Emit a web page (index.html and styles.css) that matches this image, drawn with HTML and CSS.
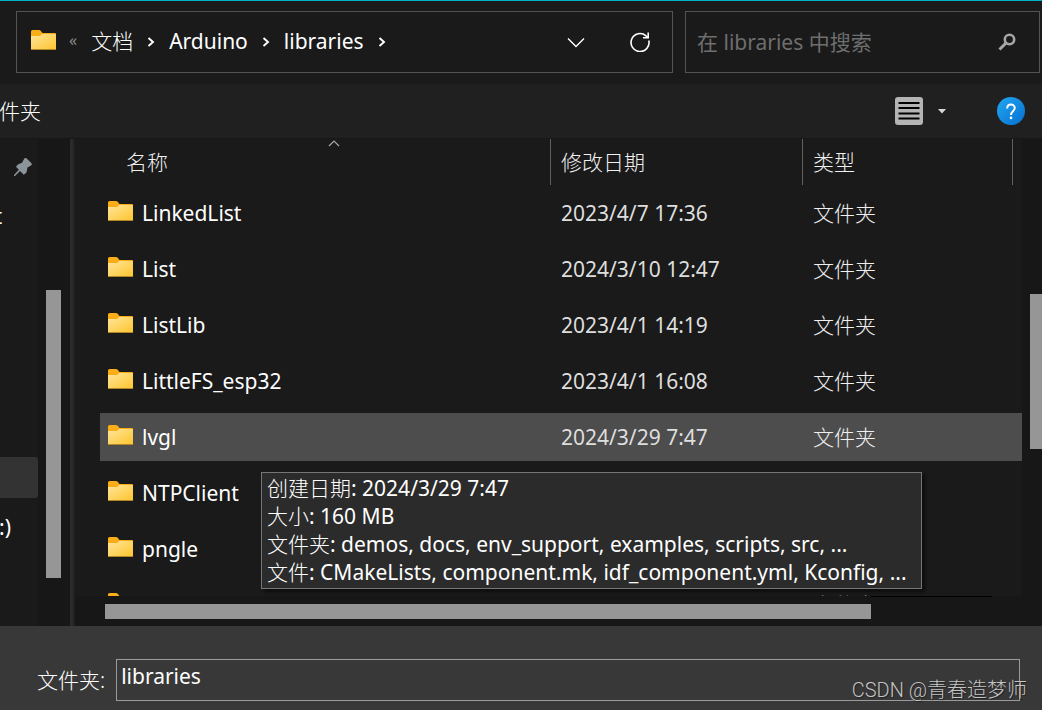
FILE: index.html
```html
<!DOCTYPE html>
<html lang="zh-CN">
<head>
    <meta charset="UTF-8">
    <meta name="viewport" content="width=device-width, initial-scale=1.0">
    <title>libraries</title>
    <link rel="stylesheet" href="styles.css">
</head>
<body>
    <!-- shared icons -->
    <svg class="defs" width="0" height="0" aria-hidden="true">
        <defs>
            <linearGradient id="paper" x1="0" y1="0" x2="1" y2="1">
                <stop offset="0" stop-color="#ffe69c"/>
                <stop offset="1" stop-color="#fdc52f"/>
            </linearGradient>
            <linearGradient id="blue" x1="0" y1="0" x2="1" y2="1">
                <stop offset="0" stop-color="#22a7f2"/>
                <stop offset="1" stop-color="#0670cf"/>
            </linearGradient>
            <symbol id="folder" viewBox="0 0 26 20">
                <path d="M0 1.500Q0 0 1.500 0H8Q9 0 9.700 .8L11.500 3H24Q25 3 25 4V19Q25 20 24 20H1Q0 20 0 19Z" fill="#f9ad16"/>
                <path d="M0 6H8.500Q9.300 6 10 5.300L11 4H24.500Q25 4 25 4.500V19H0Z" fill="url(#paper)"/>
                <path d="M0 19H25Q25 20 24 20H1Q0 20 0 19Z" fill="#b5852a"/>
            </symbol>
            <symbol id="crumb" viewBox="0 0 8 10">
                <path d="M1.500 1L6 5L1.500 9" fill="none" stroke="#fff" stroke-width="1.900"/>
            </symbol>
        </defs>
    </svg>

    <header class="topbar">
        <nav class="address">
            <svg class="folder"><use href="#folder"/></svg>
            <span class="more">«</span>
            <a href="#" class="cjk">文档</a>
            <svg class="crumb"><use href="#crumb"/></svg>
            <a href="#">Arduino</a>
            <svg class="crumb"><use href="#crumb"/></svg>
            <a href="#">libraries</a>
            <svg class="crumb"><use href="#crumb"/></svg>
            <button class="history" aria-label="历史记录">
                <svg width="18" height="11" viewBox="0 0 18 11"><path d="M1 1.500L9 9.500L17 1.500" fill="none" stroke="#fff" stroke-width="1.400"/></svg>
            </button>
            <button aria-label="刷新">
                <svg width="20" height="20" viewBox="0 0 20 20" fill="none" stroke="#fff" stroke-width="1.600"><path d="M18.800 8.500A9 9 0 1 1 16 3.800L18 5.500"/><path d="M18.200 .5V5.800H13"/></svg>
            </button>
        </nav>
        <form class="search">
            <input type="text" placeholder="在 libraries 中搜索" aria-label="搜索">
            <button type="button" aria-label="搜索">
                <svg width="18" height="18" viewBox="0 0 18 18" fill="none" stroke="#a6a6a6"><circle cx="11.500" cy="6.500" r="4.700" stroke-width="2.600"/><path d="M8 10L1.500 16.500" stroke-width="3"/></svg>
            </button>
        </form>
    </header>

    <div class="toolbar">
        <button class="new cjk">新建文件夹</button>
        <div class="tools">
            <button aria-label="更改视图">
                <svg width="28" height="28" viewBox="0 0 28 28"><rect width="28" height="28" rx="3" fill="#b4b4b4"/><path d="M3.500 6H24.500M3.500 11H24.500M3.500 16.500H24.500M3.500 21.500H24.500" stroke="#000" stroke-width="2"/></svg>
            </button>
            <button class="arrow" aria-label="更多选项">
                <svg width="8" height="5" viewBox="0 0 8 5"><path d="M0 0H8L4 4.500Z" fill="#d8d8d8"/></svg>
            </button>
            <button class="help" aria-label="帮助">
                <svg width="28" height="28" viewBox="0 0 28 28"><circle cx="14" cy="14" r="14" fill="url(#blue)"/><path d="M10.200 11.400C10.200 6.300 17.800 6.400 17.800 11C17.800 14 14 14 14 18" fill="none" stroke="#fff" stroke-width="1.900"/><circle cx="14" cy="20.900" r="1.300" fill="#fff"/></svg>
            </button>
        </div>
    </div>

    <main class="browser">
        <aside class="tree">
            <div class="node pinned">
                <svg width="20" height="20" viewBox="0 0 20 20"><path d="M11.500 1.200Q12.500 .6 13.500 1.300L18.500 6.300Q19.300 7.300 18.400 8.200L14.500 10.600L13.500 15.500L10.800 17.800L7 14L2 19H1V18L5.800 12.800L3 9.800L4.800 7.600L9 5.700Z" fill="#8b9499"/></svg>
            </div>
            <div class="node">List</div>
            <div class="node selected"></div>
            <div class="node">(D:)</div>
        </aside>
        <div class="tree-scroll"><div class="thumb"></div></div>
        <div class="splitter"></div>

        <section class="list">
            <div class="rows">
                <table>
                    <colgroup>
                        <col class="col-name">
                        <col class="col-date">
                        <col class="col-type">
                        <col class="col-rest">
                    </colgroup>
                    <thead>
                        <tr class="cjk">
                            <th>
                                <svg class="sort" width="12" height="7" viewBox="0 0 12 7"><path d="M1 6L6 1L11 6" fill="none" stroke="#a8a8a8" stroke-width="1.200"/></svg>
                                名称
                            </th>
                            <th>修改日期</th>
                            <th>类型</th>
                            <th></th>
                        </tr>
                    </thead>
                    <tbody>
                        <tr>
                            <td><div class="name"><svg class="folder"><use href="#folder"/></svg>LinkedList</div></td>
                            <td>2023/4/7 17:36</td>
                            <td class="cjk">文件夹</td>
                            <td></td>
                        </tr>
                        <tr>
                            <td><div class="name"><svg class="folder"><use href="#folder"/></svg>List</div></td>
                            <td>2024/3/10 12:47</td>
                            <td class="cjk">文件夹</td>
                            <td></td>
                        </tr>
                        <tr>
                            <td><div class="name"><svg class="folder"><use href="#folder"/></svg>ListLib</div></td>
                            <td>2023/4/1 14:19</td>
                            <td class="cjk">文件夹</td>
                            <td></td>
                        </tr>
                        <tr>
                            <td><div class="name"><svg class="folder"><use href="#folder"/></svg>LittleFS_esp32</div></td>
                            <td>2023/4/1 16:08</td>
                            <td class="cjk">文件夹</td>
                            <td></td>
                        </tr>
                        <tr class="hover">
                            <td><div class="name"><svg class="folder"><use href="#folder"/></svg>lvgl</div></td>
                            <td>2024/3/29 7:47</td>
                            <td class="cjk">文件夹</td>
                            <td></td>
                        </tr>
                        <tr>
                            <td><div class="name"><svg class="folder"><use href="#folder"/></svg>NTPClient</div></td>
                            <td></td>
                            <td></td>
                            <td></td>
                        </tr>
                        <tr>
                            <td><div class="name"><svg class="folder"><use href="#folder"/></svg>pngle</div></td>
                            <td></td>
                            <td></td>
                            <td></td>
                        </tr>
                        <tr>
                            <td><div class="name"><svg class="folder"><use href="#folder"/></svg></div></td>
                            <td></td>
                            <td class="cjk">文件夹</td>
                            <td></td>
                        </tr>
                    </tbody>
                </table>
            </div>
            <div class="list-hscroll"><div class="thumb"></div></div>
            <div class="tooltip" role="tooltip">
                <div><span class="cjk">创建日期</span>: 2024/3/29 7:47</div>
                <div><span class="cjk">大小</span>: 160 MB</div>
                <div><span class="cjk">文件夹</span>: demos, docs, env_support, examples, scripts, src, ...</div>
                <div><span class="cjk">文件</span>: CMakeLists, component.mk, idf_component.yml, Kconfig, ...</div>
            </div>
        </section>
        <div class="list-vscroll"><div class="thumb"></div></div>
    </main>

    <footer class="bottom">
        <label for="folder-name" class="cjk">文件夹:</label>
        <input type="text" id="folder-name" value="libraries">
        <span class="watermark">CSDN @青春造梦师</span>
    </footer>
</body>
</html>
```
FILE: styles.css
```css
* {
    box-sizing: border-box;
}

body {
    margin: 0;
    height: 100vh;
    display: flex;
    flex-direction: column;
    overflow: hidden;
    border-top: 1px solid #00b4c8;
    background-color: #1a1a1a;
    color: #fff;
    font-family: "Noto Sans", "Noto Sans CJK SC", sans-serif;
    font-size: 21px;
    font-weight: 400;
    line-height: 28px;
}

button {
    display: flex;
    padding: 0;
    border: none;
    background: none;
    color: inherit;
    font: inherit;
    cursor: pointer;
}

a {
    color: inherit;
    text-decoration: none;
}

input {
    min-width: 0;
    outline: none;
    background: none;
    color: #fff;
    font-family: inherit;
    font-size: 21px;
}

svg {
    display: block;
    flex: none;
}

.defs {
    position: absolute;
}

.cjk,
.cjk th {
    font-weight: 300;
}

.folder {
    width: 26px;
    height: 20px;
}

/* address and search */
.topbar {
    display: flex;
    gap: 12px;
    height: 83px;
    padding: 10px 2px 11px 16px;
}

.address {
    flex: 1;
    display: flex;
    align-items: center;
    padding: 0 22px 0 14px;
    border: 1px solid #535353;
}

.address a {
    margin-bottom: 2px;
}

.address .more,
.address .folder {
    margin-bottom: 4px;
}

.address .more {
    margin-left: 12px;
    margin-right: 14px;
    color: #8a8a8a;
    font-size: 16px;
}

.crumb {
    width: 8px;
    height: 10px;
    margin: 0 14px;
}

.history {
    margin-left: auto;
    margin-right: 45px;
}

.search {
    display: flex;
    align-items: center;
    width: 355px;
    padding: 0 23px 0 11px;
    border: 1px solid #535353;
}

.search input {
    flex: 1;
    padding: 0;
    border: none;
}

.search input::placeholder {
    color: #6e6e6e;
}

/* toolbar */
.toolbar {
    display: flex;
    align-items: center;
    justify-content: space-between;
    height: 54px;
    padding-right: 17px;
    background-color: #202020;
}

.new {
    width: 41px;
    justify-content: flex-end;
    overflow: hidden;
    white-space: nowrap;
}

.tools {
    display: flex;
    align-items: center;
}

.arrow {
    margin-left: 15px;
}

.help {
    margin-left: 51px;
}

/* file browser */
.browser {
    flex: 1;
    display: flex;
    min-height: 0;
    border-top: 1px solid #171717;
}

.tree {
    width: 38px;
    padding-top: 7px;
    overflow: hidden;
}

.node {
    display: flex;
    align-items: center;
    justify-content: flex-end;
    height: 41px;
    margin-bottom: 8px;
    padding-right: 36px;
}

.node.pinned {
    padding-right: 5px;
}

.node.selected {
    margin-top: 221px;
    background-color: #333;
    border-radius: 0 3px 3px 0;
}

.node:last-child {
    padding-right: 27px;
}

.thumb {
    background-color: #969696;
}

.tree-scroll {
    width: 32px;
    padding: 151px 9px 48px 8px;
    background-color: #171717;
}

.tree-scroll .thumb {
    height: 100%;
}

.splitter {
    width: 5px;
    border-left: 3px solid #2b2b2b;
    background-color: #202020;
}

.list {
    flex: 1;
    display: flex;
    flex-direction: column;
    min-width: 0;
    position: relative;
}

.rows {
    flex: 1;
    overflow: hidden;
    padding-left: 25px;
}

table {
    width: 100%;
    table-layout: fixed;
    border-spacing: 0;
}

.col-name {
    width: 451px;
}

.col-date {
    width: 252px;
}

.col-type {
    width: 210px;
}

th {
    height: 46px;
    padding: 0 0 0 10px;
    border-right: 1px solid #606060;
    color: #f0f0f0;
    text-align: left;
}

th:first-child {
    position: relative;
    padding-left: 26px;
}

th:last-child {
    border-right: none;
}

.sort {
    position: absolute;
    top: 1px;
    left: 228px;
}

td {
    height: 56px;
    padding: 0 0 0 10px;
    border: solid transparent;
    border-width: 4px 0;
    background-clip: padding-box;
    color: #dedede;
}

td:first-child {
    padding-left: 8px;
    color: #fff;
}

td.cjk {
    color: #f0f0f0;
}

.hover td {
    background-color: #4d4d4d;
}

.name {
    display: flex;
    gap: 8px;
    height: 28px;
}

.name .folder {
    margin-top: 2px;
}

.list-hscroll {
    height: 30px;
    padding: 8px 151px 7px 30px;
    position: relative;
    background-color: #171717;
}

.list-hscroll .thumb {
    height: 15px;
}

.list-hscroll::after {
    content: "";
    position: absolute;
    top: 0;
    right: 30px;
    width: 121px;
    height: 1px;
    background-color: #000;
}

.list-vscroll {
    width: 20px;
    padding: 155px 0 0 8px;
    background-color: #171717;
}

.list-vscroll .thumb {
    height: 155px;
}

.tooltip {
    position: absolute;
    top: 333px;
    left: 186px;
    padding: 1px 14px 2px 5px;
    border: 1px solid #767676;
    background-color: #2b2b2b;
    box-shadow: 3px 3px 3px rgba(0, 0, 0, 0.5);
    white-space: nowrap;
}

.tooltip div {
    height: 28px;
}

/* folder name */
.bottom {
    display: flex;
    align-items: center;
    gap: 11px;
    height: 84px;
    padding: 24px 22px 0 37px;
    position: relative;
    background-color: #383838;
}

.bottom input {
    flex: 1;
    height: 42px;
    padding: 0 4px 8px;
    border: 1px solid #9b9b9b;
}

.watermark {
    position: absolute;
    right: 15px;
    bottom: 6px;
    color: #c4c4c4;
    font-family: Roboto, "Noto Sans CJK SC", sans-serif;
    font-size: 20px;
    font-weight: 300;
    text-shadow: 1px 1px 1px #222;
}
```
